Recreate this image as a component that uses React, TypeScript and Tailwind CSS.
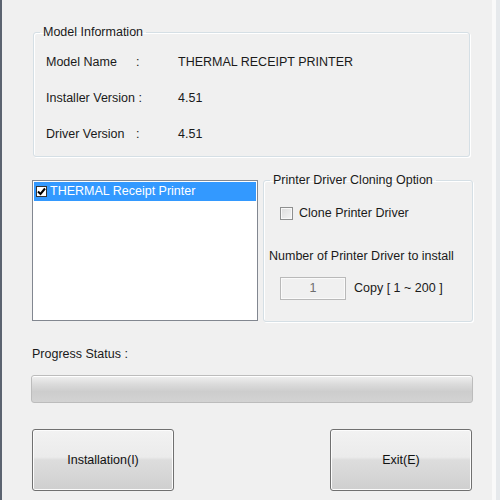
import type { ReactNode } from 'react'

function GroupBox({ title, className, children }: { title: string; className: string; children: ReactNode }) {
  return (
    <fieldset className={`rounded-[3px] border border-[#d5dfe5] shadow-[inset_1px_1px_0_#ffffff,1px_1px_0_#ffffff] ${className}`}>
      <legend className="ml-[6px] px-[3px] leading-[14px] text-[#1a1a1a]">{title}</legend>
      {children}
    </fieldset>
  )
}

function InfoRow({ label, colon, value }: { label: string; colon: string; value: string }) {
  return (
    <div className="flex h-[36px] items-center whitespace-nowrap">
      <span className="w-[102px] shrink-0 pl-[12px]">{label}</span>
      <span className="w-[42px] shrink-0">{colon}</span>
      <span>{value}</span>
    </div>
  )
}

function WinButton({ label, className }: { label: string; className?: string }) {
  return (
    <button
      className={`flex h-[62px] w-[142px] items-center justify-center rounded-[3px] border border-[#707070] bg-[linear-gradient(#f2f2f2_0%,#ebebeb_45%,#dddddd_50%,#cfcfcf_100%)] text-[#111] shadow-[inset_0_0_0_1px_#fcfcfc] ${className ?? ''}`}
    >
      {label}
    </button>
  )
}

export default function App() {
  return (
    <div
      className="flex h-[500px] w-[500px] overflow-hidden bg-[#f0f0f0] text-[12.5px] text-[#1a1a1a]"
      style={{ fontFamily: '"Liberation Sans", Arial, sans-serif' }}
    >
      <div className="w-[2px] shrink-0 bg-[#5b6370]" />
      <div className="flex w-[490px] shrink-0 flex-col pl-[30px]">
        <GroupBox title="Model Information" className="mt-[25px] ml-[1px] h-[132px] w-[437px] pt-[5px]">
          <InfoRow label="Model Name" colon=":" value="THERMAL RECEIPT PRINTER" />
          <InfoRow label="Installer Version :" colon="" value="4.51" />
          <InfoRow label="Driver Version" colon=":" value="4.51" />
        </GroupBox>

        <div className="mt-[23px] flex">
          <div className="h-[141px] w-[226px] border border-[#828790] bg-white p-[1px]">
            <div className="flex h-[19px] items-center gap-[3px] bg-[#3399ff] pl-[2px] text-white">
              <span className="flex h-[11px] w-[11px] items-center justify-center border border-[#333] bg-white">
                <svg width="9" height="9" viewBox="0 0 9 9">
                  <path d="M1 4.5 L3.5 7 L8 1.5" fill="none" stroke="#000" strokeWidth="2" />
                </svg>
              </span>
              <span>THERMAL Receipt Printer</span>
            </div>
          </div>

          <GroupBox title="Printer Driver Cloning Option" className="-mt-[7px] ml-[5px] h-[149px] w-[210px]">
            <div className="mt-[17px] flex items-center gap-[6px] pl-[16px]">
              <span className="h-[13px] w-[13px] border border-[#8e8f8f] bg-[linear-gradient(135deg,#dcdcdc,#f4f4f4)] shadow-[inset_0_0_0_1px_#f8f8f8]" />
              <span>Clone Printer Driver</span>
            </div>
            <div className="mt-[24px] pl-[5px] whitespace-nowrap">Number of Printer Driver to install</div>
            <div className="mt-[11px] flex items-center gap-[8px] pl-[16px]">
              <div className="flex h-[23px] w-[66px] items-center justify-center border border-[#b9b9b9] bg-[#f0f0f0] text-[#6d6d6d] shadow-[inset_0_0_0_1px_#fafafa]">
                1
              </div>
              <span>Copy [ 1 ~ 200 ]</span>
            </div>
          </GroupBox>
        </div>

        <div className="mt-[25px] leading-[14px]">Progress Status :</div>

        <div className="mt-[14px] -ml-[1px] h-[28px] w-[442px] rounded-[3px] border border-[#bcbcbc] bg-[linear-gradient(#f0f0f0_0%,#dcdcdc_30%,#cdcdcd_60%,#d3d3d3_100%)] shadow-[inset_0_1px_0_#ffffff]" />

        <div className="mt-[26px] flex w-[440px] justify-between">
          <WinButton label="Installation(I)" />
          <WinButton label="Exit(E)" />
        </div>
      </div>
      <div className="w-[4px] shrink-0 bg-[#f9f9f9]" />
      <div className="flex-1 bg-[#e6e9ec]" />
    </div>
  )
}
